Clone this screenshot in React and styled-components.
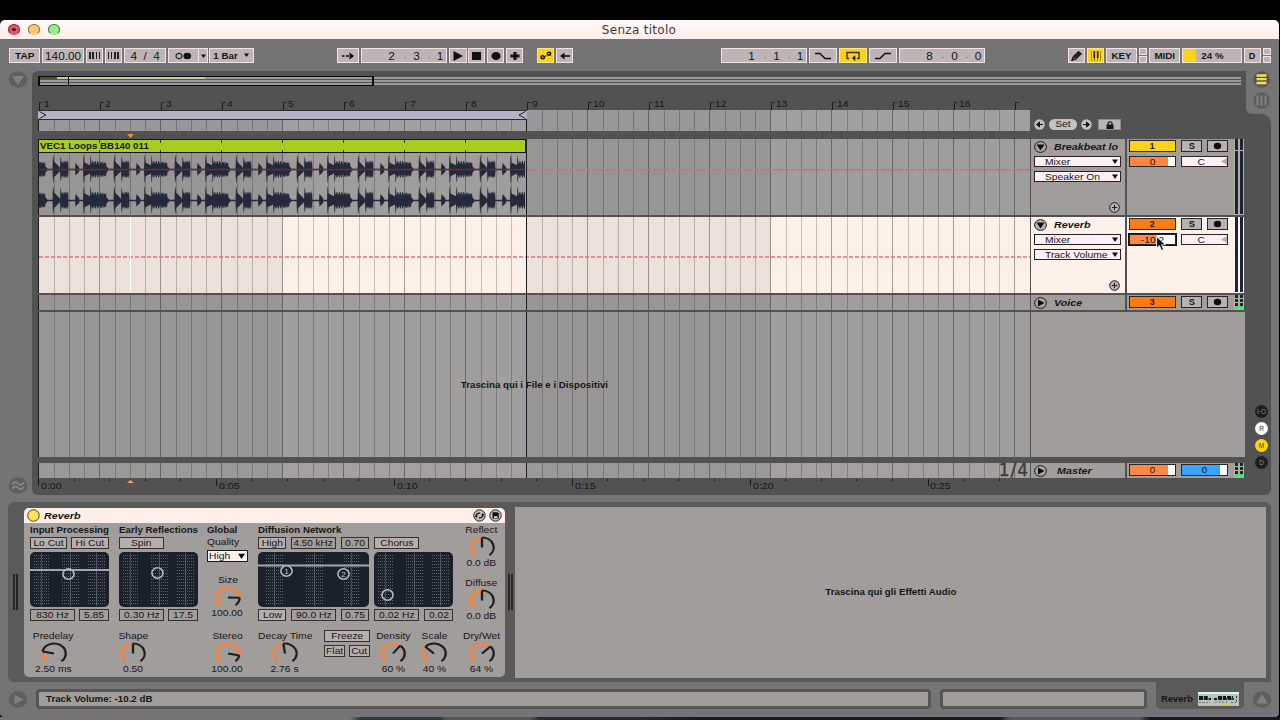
import React from 'react'
import styled, { createGlobalStyle } from 'styled-components'

const colors = {
  chrome: '#747474',
  panel: '#525252',
  detail: '#5a5a5a',
  surface: '#a19d9b',
  control: '#bdb5b5',
  controlEdge: '#efe3e3',
  selected: '#fdf1e9',
  yellow: '#fdd31a',
  orange: '#ff7a0f',
  knob: '#fb8138',
  ink: '#161616',
  screen: '#1b212a',
}

const BAR = 61
const LANES_WIDTH = 992

const GlobalStyle = createGlobalStyle`
  * {
    box-sizing: border-box;
  }
  body {
    margin: 0;
    background: #000;
    overflow: hidden;
    font-family: 'Liberation Sans', Arial, sans-serif;
    font-size: 9.2px;
    line-height: 12px;
    color: ${colors.ink};
  }
  svg {
    display: block;
    flex: none;
  }
`

const defaultStretch = ({ $stretch, $bold, $italic }) => {
  if ($stretch) return $stretch
  if ($italic) return 1.17
  return $bold ? 1.06 : 1.12
}

const Text = styled.span`
  display: inline-block;
  white-space: pre;
  font-size: ${(props) => props.$size ?? 9.2}px;
  font-weight: ${(props) => (props.$bold ? 700 : 400)};
  font-style: ${(props) => (props.$italic ? 'italic' : 'normal')};
  transform: scaleX(${defaultStretch});
  transform-origin: ${(props) => props.$origin ?? 'center'};
`

/* ---------- window ---------- */

const Screen = styled.div`
  width: 1280px;
  height: 720px;
  padding-top: 20px;
  background: #000;
`

const TitleBar = styled.div`
  height: 19px;
  width: 1279px;
  display: flex;
  align-items: center;
  position: relative;
  padding-left: 8px;
  gap: 8px;
  border-radius: 5px 5px 0 0;
  background: linear-gradient(#fffafa, #feedec);
`

const TitleText = styled.div`
  position: absolute;
  top: 1px;
  left: 0;
  right: 1px;
  text-align: center;
  font-family: 'DejaVu Sans', sans-serif;
  font-size: 12px;
  line-height: 19px;
  letter-spacing: 0.3px;
  color: #3c3838;
`

const Light = styled.span`
  width: 12px;
  height: 11px;
  border-radius: 50%;
  border: 1px solid ${(props) => props.$edge};
  border-bottom-color: ${(props) => props.$color};
  background: ${(props) => props.$color};
  display: flex;
  align-items: center;
  justify-content: center;

  &::after {
    content: '';
    width: 4px;
    height: 3px;
    border-radius: 2px;
    background: ${(props) => props.$dot ?? 'transparent'};
  }
`

const Body = styled.div`
  width: 1279px;
  height: 678px;
  background: ${colors.chrome};
  border-radius: 0 0 4px 4px;
`

const Desktop = styled.div`
  height: 3px;
  background: linear-gradient(
    90deg,
    #76766c 0 350px,
    #2c3843 360px 440px,
    #55555a 445px 530px,
    #2b2638 540px 640px,
    #161828 700px 1000px,
    #5b5462 1010px 1140px,
    #14172a 1150px
  );
`

/* ---------- toolbar ---------- */

const Toolbar = styled.div`
  height: 32px;
  padding: 9px 0 0 9px;
  display: flex;
  align-items: flex-start;
`

const ToolButton = styled.div`
  width: ${(props) => props.$w}px;
  height: 15px;
  margin-left: ${(props) => props.$ml ?? 2}px;
  flex: none;
  display: flex;
  align-items: center;
  justify-content: center;
  border: 1px solid ${(props) => (props.$on ? '#ffe98a' : colors.controlEdge)};
  background: ${(props) => (props.$on ? colors.yellow : colors.control)};
`

const Digits = styled(ToolButton)`
  display: grid;
  grid-template-columns: 19px 19px 8px 15px 10px 12px;
  text-align: center;
`

const MapPair = styled.div`
  width: 8px;
  height: 15px;
  margin-left: 2px;
  display: flex;
  flex-direction: column;
  justify-content: space-between;
`

const MapCell = styled.span`
  height: 7px;
  border: 1px solid ${colors.controlEdge};
  background: ${colors.control};
`

const CpuMeter = styled(ToolButton)`
  background: linear-gradient(90deg, ${colors.yellow} 13px, ${colors.control} 13px);
`

const Caret = ({ size = 6 }) => (
  <svg width={size} height={size - 1} viewBox="0 0 6 5">
    <path d="M0 0.5H6L3 5Z" fill="#111" />
  </svg>
)

const Bars = ({ xs }) => (
  <svg width="13" height="7" viewBox="0 0 13 7">
    {xs.map(([x, w]) => (
      <rect key={x} x={x} width={w} height="7" fill="#222" />
    ))}
  </svg>
)

const Position = ({ digits, ml }) => (
  <Digits $w={86} $ml={ml}>
    <span />
    <Text $size={10.5}>{digits[0]}</Text>
    <Text $size={8}>.</Text>
    <Text $size={10.5}>{digits[1]}</Text>
    <Text $size={8}>.</Text>
    <Text $size={10.5}>{digits[2]}</Text>
  </Digits>
)

const ToolbarRow = () => (
  <Toolbar>
    <ToolButton $w={31} $ml={0}>
      <Text $bold $stretch={1.1}>TAP</Text>
    </ToolButton>
    <ToolButton $w={42}>
      <Text $size={10.5} $stretch={1.12}>140.00</Text>
    </ToolButton>
    <ToolButton $w={17}>
      <Bars xs={[[1, 2], [4, 2], [8, 1], [11, 1]]} />
    </ToolButton>
    <ToolButton $w={17}>
      <Bars xs={[[1, 1], [4, 1], [7, 2], [10, 2]]} />
    </ToolButton>
    <ToolButton $w={42}>
      <Text $size={10.5} $stretch={1.12}>{'4  /  4'}</Text>
    </ToolButton>
    <ToolButton $w={31}>
      <svg width="18" height="8" viewBox="0 0 18 8">
        <ellipse cx="4" cy="4" rx="3" ry="2.7" fill="none" stroke="#222" strokeWidth="1.2" />
        <ellipse cx="12.3" cy="4" rx="3.8" ry="3.3" fill="#111" />
      </svg>
    </ToolButton>
    <ToolButton $w={10} $ml={-1}>
      <Caret size={5} />
    </ToolButton>
    <ToolButton $w={45} $ml={1}>
      <Text $bold>1 Bar</Text>
      <svg width="13" height="5" viewBox="0 0 13 5">
        <path d="M8 0.5H13L10.5 4Z" fill="#111" />
      </svg>
    </ToolButton>

    <ToolButton $w={22} $ml={83}>
      <svg width="14" height="8" viewBox="0 0 14 8">
        <path d="M1 4H3.5M5 4H8" stroke="#333" strokeWidth="2" />
        <path d="M8.5 0.3L13 4L8.5 7.7Z" fill="#111" />
      </svg>
    </ToolButton>
    <Position digits={['2', '3', '1']} />
    <ToolButton $w={18}>
      <svg width="10" height="10" viewBox="0 0 10 10">
        <path d="M0.5 0L10 5L0.5 10Z" fill="#111" />
      </svg>
    </ToolButton>
    <ToolButton $w={17} $ml={1}>
      <svg width="9" height="8" viewBox="0 0 9 8">
        <path d="M0 0H9V8H0Z" fill="#111" />
      </svg>
    </ToolButton>
    <ToolButton $w={17}>
      <svg width="10" height="8" viewBox="0 0 10 8">
        <ellipse cx="5" cy="4" rx="4.6" ry="4" fill="#111" />
      </svg>
    </ToolButton>
    <ToolButton $w={17}>
      <svg width="10" height="8" viewBox="0 0 10 8">
        <path d="M5 0V8M0.5 4H9.5" stroke="#111" strokeWidth="3" />
      </svg>
    </ToolButton>
    <ToolButton $w={17} $ml={14} $on>
      <svg width="12" height="9" viewBox="0 0 12 9">
        <ellipse cx="2.7" cy="6.3" rx="1.7" ry="1.5" fill="none" stroke="#111" strokeWidth="1.5" />
        <ellipse cx="9" cy="2.7" rx="1.7" ry="1.5" fill="none" stroke="#111" strokeWidth="1.5" />
        <path d="M5 5H6.5" stroke="#111" strokeWidth="1.2" />
      </svg>
    </ToolButton>
    <ToolButton $w={17}>
      <svg width="10" height="8" viewBox="0 0 10 8">
        <path d="M2 4H10" stroke="#111" strokeWidth="1.6" />
        <path d="M0 4L4.5 0.5V7.5Z" fill="#111" />
      </svg>
    </ToolButton>

    <Position digits={['1', '1', '1']} ml={148} />
    <ToolButton $w={28}>
      <svg width="16" height="8" viewBox="0 0 16 8">
        <path d="M0 1.5H5L10 6.5H16" fill="none" stroke="#111" strokeWidth="1.5" />
      </svg>
    </ToolButton>
    <ToolButton $w={28} $on>
      <svg width="14" height="10" viewBox="0 0 14 10">
        <path d="M3 7.5H1V1.5H13V7.5H11" fill="none" stroke="#3a2d00" strokeWidth="1.3" />
        <path d="M6 7L9.3 4.3V10Z" fill="#111" />
      </svg>
    </ToolButton>
    <ToolButton $w={28}>
      <svg width="16" height="8" viewBox="0 0 16 8">
        <path d="M0 6.5H5L10 1.5H16" fill="none" stroke="#111" strokeWidth="1.5" />
      </svg>
    </ToolButton>
    <Position digits={['8', '0', '0']} />

    <ToolButton $w={17} $ml={83}>
      <svg width="11" height="10" viewBox="0 0 11 10">
        <path d="M1 9.3L2.2 5.8L7.5 0.8L10 2.8L4.8 8Z" fill="#777" stroke="#111" strokeWidth="1.3" />
        <path d="M3.3 6.8L8.3 2.2" stroke="#111" strokeWidth="1.3" />
      </svg>
    </ToolButton>
    <ToolButton $w={17} $on>
      <svg width="10" height="10" viewBox="0 0 10 10">
        <path d="M0.5 0V10M9.5 0V10" stroke="#a88a08" />
        <path d="M3.5 6V10M6.5 6V10" stroke="#8a7008" />
        <path d="M3.3 0V7M6.7 0V7" stroke="#2a2200" strokeWidth="1.7" />
      </svg>
    </ToolButton>
    <ToolButton $w={31}>
      <Text $bold>KEY</Text>
    </ToolButton>
    <MapPair>
      <MapCell />
      <MapCell />
    </MapPair>
    <ToolButton $w={31}>
      <Text $bold>MIDI</Text>
    </ToolButton>
    <CpuMeter $w={60}>
      <Text $bold>24 %</Text>
    </CpuMeter>
    <ToolButton $w={17}>
      <Text $bold $size={8.6}>D</Text>
    </ToolButton>
    <MapPair>
      <MapCell />
      <MapCell />
    </MapPair>
  </Toolbar>
)

/* ---------- arrangement ---------- */

const ArrangeArea = styled.div`
  height: 424px;
  display: flex;
`

const LeftRail = styled.div`
  width: 32px;
  padding: 0 0 1px 3px;
  display: flex;
  flex-direction: column;
  align-items: center;
  justify-content: space-between;
`

const ArrangePanel = styled.div`
  position: relative;
  width: 1239px;
  padding-left: 6px;
  border-radius: 6px;
  background: ${colors.panel};
`

const Notch = styled.div`
  position: absolute;
  top: 0;
  right: 0;
  width: 25px;
  height: 43px;
  display: flex;
  flex-direction: column;
  align-items: center;
  gap: 4px;
  padding-left: 5px;
  background: ${colors.chrome};
  border-bottom-left-radius: 6px;

  &::after {
    content: '';
    position: absolute;
    top: 43px;
    right: 0;
    width: 8px;
    height: 8px;
    background: radial-gradient(circle at 0 100%, transparent 7px, ${colors.chrome} 8px);
  }
`

const Row = styled.div`
  display: flex;
  height: ${(props) => props.$h}px;
  margin-bottom: ${(props) => props.$mb ?? 0}px;
`

const Lane = styled.div`
  position: relative;
  width: ${LANES_WIDTH}px;
  flex: none;
  background: linear-gradient(
    90deg,
    ${(props) => props.$dark} 245px,
    ${(props) => props.$light} 245px 488px,
    ${(props) => props.$dark} 488px 733px,
    ${(props) => props.$light} 733px
  );
`

const LaneSvg = styled.svg`
  position: absolute;
  inset: 0;
`

const Clip = styled.div`
  position: absolute;
  inset: 0 auto 0 0;
  width: 488px;
`

const ClipHeader = styled.div`
  height: 14px;
  border: 1px solid #11150a;
  background: #a8cd20;
  padding-left: 1px;
  position: relative;
`

const BarLabels = styled.div`
  display: flex;
  height: 14px;
  padding-top: 1px;
  color: #161616;
`

const BarLabel = styled.span`
  width: ${BAR}px;
  flex: none;
  position: relative;
  padding-left: 6px;
  line-height: 14px;

  &::before {
    content: '';
    position: absolute;
    left: 1px;
    top: 5px;
    width: 3px;
    height: 9px;
    border-left: 1px solid #1c1c1c;
    border-top: 1px solid #2c2c2c;
  }
`

const LoopBrace = styled.div`
  position: relative;
  width: 489px;
  height: 10px;
  display: flex;
  justify-content: space-between;
  border: 1px solid #2a2a35;
  border-width: 1px 0;
  background: #b4b4c2;
`

const TimeRuler = styled.div`
  position: relative;
  height: 17px;
  display: flex;
`

const TimeLabel = styled.span`
  width: 177.9px;
  flex: none;
  padding: 2px 0 0 3px;
`

const DropHint = styled.div`
  position: absolute;
  inset: 0;
  display: flex;
  align-items: center;
  justify-content: center;
`

const GridSize = styled.span`
  position: absolute;
  right: 1px;
  top: -2px;
  font: 17px/19px 'DejaVu Sans', sans-serif;
  letter-spacing: 1px;
  -webkit-text-stroke: 0.4px #3f3d3c;
  color: #3f3d3c;
`

const Header = styled.div`
  width: 94px;
  margin-left: 1px;
  flex: none;
  position: relative;
  background: ${(props) => (props.$selected ? colors.selected : colors.surface)};
`

const HeaderTitle = styled.div`
  height: 15px;
  display: flex;
  align-items: center;
  gap: 7px;
  padding-left: 3px;
`

const Chooser = styled.div`
  width: 87px;
  height: 11px;
  margin: ${(props) => props.$mt}px 0 0 3px;
  padding: 0 2px 0 10px;
  display: flex;
  align-items: center;
  justify-content: space-between;
  border: 1px solid #2a2024;
  background: #fdeff3;
`

const AddLane = styled.div`
  position: absolute;
  right: 5px;
  bottom: 2px;
`

const Mixer = styled.div`
  width: 107px;
  margin-left: 2px;
  padding: 1px 0 0 2px;
  flex: none;
  display: grid;
  grid-template-columns: 47px 21px 21px;
  grid-template-rows: 12px 11px;
  column-gap: 5px;
  row-gap: 4px;
  background: ${(props) => (props.$selected ? colors.selected : colors.surface)};
`

const MixButton = styled.div`
  display: flex;
  align-items: center;
  justify-content: center;
  border: 1px solid #2b2523;
  background: ${(props) => props.$bg ?? '#b9b1b1'};
`

const NumberButton = styled(MixButton)`
  padding-top: 2px;
`

const MixValue = styled(MixButton)`
  position: relative;
  background: linear-gradient(90deg, ${(props) => props.$bg} ${(props) => props.$fill}px, #fff ${(props) => props.$fill}px);
  outline: ${(props) => (props.$focus ? '1px solid #111' : 'none')};
`

const Pan = styled(MixButton)`
  grid-column: 2 / 4;
  position: relative;
  padding-right: 6px;
  background: #fdeff3;

  svg {
    position: absolute;
    right: 0;
  }
`

const Meters = styled.div`
  width: 10px;
  display: flex;
  gap: 2px;
  padding: 0 0 1px 1px;
  background: ${(props) => (props.$selected ? '#fff6fa' : '#b0acab')};
`

const meterFill = ({ $live, $solid }) => {
  if ($solid) return '#1b2430'
  return $live
    ? 'linear-gradient(transparent 11px, #31f06c 11px), repeating-linear-gradient(#1d2421 0 3px, #a9c4b4 3px 4px)'
    : 'linear-gradient(#1b2430 11px, #b9b9b9 11px 12px, #1b2430 12px)'
}

const Meter = styled.span`
  width: 3px;
  background: ${meterFill};
`

const Locators = styled.div`
  display: flex;
  align-items: center;
  gap: 3px;
  padding: 8px 0 0 4px;
`

const SetPill = styled.span`
  width: 28px;
  height: 11px;
  margin: 0 1px;
  border-radius: 6px;
  background: #c6c0c0;
  text-align: center;
  line-height: 11px;
`

const LockButton = styled.span`
  width: 23px;
  height: 11px;
  margin-left: 3px;
  display: flex;
  align-items: center;
  justify-content: center;
  background: #bab4b4;
  border: 1px solid #918c8c;
`

const ShowButtons = styled.div`
  position: absolute;
  right: 3px;
  top: 334px;
  display: flex;
  flex-direction: column;
  gap: 4px;
`

const ShowButton = styled.span`
  width: 13px;
  height: 13px;
  border-radius: 50%;
  text-align: center;
  font-size: 6.5px;
  line-height: 13px;
  color: ${(props) => props.$fg ?? '#8b8b8b'};
  background: ${(props) => props.$bg ?? '#1e1e1e'};
`

const gridLines = Array.from({ length: 65 }, (_, i) => ({
  x: Math.round(0.4 + (i * BAR) / 4),
  bar: i % 4 === 0,
}))

const Grid = ({ h, children }) => (
  <LaneSvg width={LANES_WIDTH} height={h} viewBox={`0 0 ${LANES_WIDTH} ${h}`}>
    {gridLines.map(({ x, bar }) => (
      <rect key={x} x={x} width="1" height={h} fill="#000" opacity={bar ? 0.34 : 0.21} />
    ))}
    {children}
    <rect x="488" width="1" height={h} fill="#1b1b28" />
    <rect x="0" width="1" height={h} fill="#1b1b1b" />
  </LaneSvg>
)

// hits inside one bar: start, length, peak, level at the end
const hits = [
  [0, 7, 8, 7],
  [7, 2, 3, 1],
  [14.5, 1, 14, 13],
  [15.5, 6, 8, 2],
  [22, 1, 13, 10],
  [23, 7, 8, 9],
  [37, 4, 6.5, 2],
  [45, 1, 14, 13],
  [46, 6, 7, 4],
  [52, 1, 14, 10],
  [53, 8, 8, 8],
]

const peakAt = (x) => {
  const t = x % BAR
  const hit = hits.find(([start, length]) => t >= start && t < start + length)
  if (!hit) return 0.7
  const [start, length, from, to] = hit
  const level = from + ((to - from) * (t - start)) / length
  // sustained hits flicker, short ones just decay
  if (length <= 6) return level
  return level * (0.6 + 0.5 * Math.abs(Math.sin(t * (start > 50 ? 1.3 : 2.7))))
}

const wavePath = (cy) => {
  const top = []
  const bottom = []
  for (let x = 1; x < 487.5; x += 0.5) {
    const peak = peakAt(x - 0.5)
    top.push(`${x} ${(cy - peak).toFixed(1)}`)
    bottom.unshift(`${x} ${(cy + peak * 0.95).toFixed(1)}`)
  }
  return `M${top.join('L')}L${bottom.join('L')}Z`
}

const Fold = ({ open, selected }) => (
  <svg width="13" height="12" viewBox="0 0 13 12">
    <ellipse cx="6.5" cy="6" rx="5.9" ry="5.4" fill={selected ? '#bdb2b2' : '#aaa5a4'} stroke="#1c1c1c" />
    <path d={open ? 'M2.5 3.5H10.5L6.5 9.5Z' : 'M4 2.5L10.5 6L4 9.5Z'} fill="#0d0d0d" />
  </svg>
)

const RecordDot = () => (
  <svg width="9" height="8" viewBox="0 0 9 8">
    <ellipse cx="4.5" cy="4" rx="3.7" ry="3.3" fill="#0d0d0d" />
  </svg>
)

const PanArrow = () => (
  <svg width="6" height="7" viewBox="0 0 6 7">
    <path d="M0 3.5L6 0V7Z" fill="#b9adb0" />
  </svg>
)

const TrackHead = ({ name, number, numberColor, value, fill, params, selected, stretch }) => (
  <>
    <Header $selected={selected}>
      <HeaderTitle>
        <Fold open={!!params} selected={selected} />
        <Text $bold $italic $origin="left" $stretch={stretch}>{name}</Text>
      </HeaderTitle>
      {params && (
        <>
          <Chooser $mt={2}>
            <Text $origin="left">{params[0]}</Text>
            <Caret />
          </Chooser>
          <Chooser $mt={4}>
            <Text $origin="left">{params[1]}</Text>
            <Caret />
          </Chooser>
          <AddLane>
            <svg width="11" height="11" viewBox="0 0 11 11">
              <circle cx="5.5" cy="5.5" r="4.8" fill="#bcb2b2" stroke="#1c1c1c" />
              <path d="M5.5 2.8V8.2M2.8 5.5H8.2" stroke="#1c1c1c" />
            </svg>
          </AddLane>
        </>
      )}
    </Header>
    <Mixer $selected={selected}>
      <NumberButton $bg={numberColor}>
        <Text $size={8.2} $bold>{number}</Text>
      </NumberButton>
      <MixButton>
        <Text $size={8.8} $bold>S</Text>
      </MixButton>
      <MixButton>
        <RecordDot />
      </MixButton>
      {params && (
        <>
          <MixValue $bg="#fd8843" $fill={fill} $focus={selected}>
            <Text>{value}</Text>
            {selected && <Cursor />}
          </MixValue>
          <Pan>
            <Text>C</Text>
            <PanArrow />
          </Pan>
        </>
      )}
    </Mixer>
    <Meters $selected={selected}>
      <Meter $live={!params} $solid={selected} />
      <Meter $live={!params} $solid={selected} />
    </Meters>
  </>
)

const CursorSvg = styled.svg`
  position: absolute;
  left: 26px;
  top: 1px;
  z-index: 2;
`

const Cursor = () => (
  <CursorSvg width="12" height="16" viewBox="0 0 12 16">
    <path d="M0.6 0.5V12L3.4 9.6L5.4 14.4L7.6 13.5L5.6 8.8H9.4Z" fill="#111" stroke="#fff" strokeWidth="0.9" />
  </CursorSvg>
)

const Overview = () => (
  <svg width="1205" height="25" viewBox="0 0 1205 25">
    {[6, 9, 12].map((y) => (
      <rect key={y} x="0" y={y} width="1203" height="2" fill="#9c9998" />
    ))}
    <rect x="2" y="6" width="17" height="2" fill="#4b5220" />
    <rect x="19" y="6" width="148" height="2" fill="#c3cf96" />
    <rect x="0.5" y="5.5" width="335" height="9" fill="none" stroke="#0b0b0b" />
    <path d="M1 5V15M335 5V15" stroke="#0b0b0b" strokeWidth="2" />
    <rect x="30" y="6" width="1" height="9" fill="#0b0b0b" />
  </svg>
)

const RailIcon = ({ d, stroked }) => (
  <svg width="20" height="17" viewBox="0 0 20 17">
    <ellipse cx="10" cy="8.5" rx="9.3" ry="8.3" fill="#5f5f5f" />
    <path
      d={d}
      fill={stroked ? 'none' : '#808080'}
      stroke={stroked ? '#8a8a8a' : 'none'}
      strokeWidth="1.6"
    />
  </svg>
)

const Arrangement = () => (
  <ArrangeArea>
    <LeftRail>
      <RailIcon d="M4 5H16L10 14Z" />
      <RailIcon stroked d="M4 7.5C6 4.5 8 4.5 10 6.5S14 8.5 16 5.5M4 11.8C6 8.8 8 8.8 10 10.8S14 12.8 16 9.8" />
    </LeftRail>
    <ArrangePanel>
      <Overview />
      <BarLabels>
        {Array.from({ length: 17 }, (_, i) => (
          <BarLabel key={i}>
            <Text $origin="left">{i < 16 ? i + 1 : ''}</Text>
          </BarLabel>
        ))}
      </BarLabels>
      <Row $h={21}>
        <Lane $dark="#999799" $light="#a2a09f">
          <Grid h={21} />
          <LoopBrace>
            <svg width="9" height="8" viewBox="0 0 9 8">
              <path d="M1.5 0.5L8 4L1.5 7.5" fill="none" stroke="#222" />
            </svg>
            <svg width="9" height="8" viewBox="0 0 9 8">
              <path d="M7.5 0.5L1 4L7.5 7.5" fill="none" stroke="#222" />
            </svg>
          </LoopBrace>
        </Lane>
        <Locators>
          <svg width="11" height="11" viewBox="0 0 11 11">
            <circle cx="5.5" cy="5.5" r="5.2" fill="#c6c0c0" />
            <path d="M4 5.5H9M5.5 3L2.5 5.5L5.5 8Z" fill="#111" stroke="#111" />
          </svg>
          <SetPill>
            <Text>Set</Text>
          </SetPill>
          <svg width="11" height="11" viewBox="0 0 11 11">
            <circle cx="5.5" cy="5.5" r="5.2" fill="#c6c0c0" />
            <path d="M7 5.5H2M5.5 3L8.5 5.5L5.5 8Z" fill="#111" stroke="#111" />
          </svg>
          <LockButton>
            <svg width="8" height="8" viewBox="0 0 8 8">
              <path d="M0.5 3.5H7.5V8H0.5Z" fill="#151515" />
              <path d="M2 4V2.2C2 0.4 6 0.4 6 2.2V4" fill="none" stroke="#151515" strokeWidth="1.2" />
            </svg>
          </LockButton>
        </Locators>
      </Row>
      <svg width="992" height="8" viewBox="0 0 992 8">
        <path d="M89 3H96L92.5 7Z" fill="#f98b3a" />
      </svg>

      <Row $h={76} $mb={2}>
        <Lane $dark="#989695" $light="#a09e9c">
          <Grid h={76}>
            <rect x="489" y="30" width="503" height="1" fill="#d07c80" />
            <path d="M489 30.7H992" stroke="#ea5f69" strokeWidth="1.6" strokeDasharray="4 2" />
          </Grid>
          <Clip>
            <ClipHeader>
              <Text $bold $origin="left">VEC1 Loops BB140 011</Text>
              <LaneSvg width="486" height="12" viewBox="0 0 486 12">
                {[1, 2, 3, 4, 5, 6, 7].map((i) => (
                  <path key={i} d={`M${i * BAR - 0.5} 0V3M${i * BAR - 0.5} 10V12`} stroke="#2d3808" />
                ))}
              </LaneSvg>
            </ClipHeader>
            <svg width="488" height="62" viewBox="0 14 488 62">
              <path d={wavePath(30.5)} fill="#252a3a" />
              <rect x="1" y="29.8" width="487" height="1.5" fill="#a8283a" opacity="0.6" />
              <path d={wavePath(61.5)} fill="#252a3a" />
            </svg>
          </Clip>
        </Lane>
        <TrackHead
          name="Breakbeat lo"
          number="1"
          numberColor={colors.yellow}
          value="0"
          fill={38}
          params={['Mixer', 'Speaker On']}
          stretch={1.16}
        />
      </Row>

      <Row $h={76} $mb={2}>
        <Lane $dark="#ebe0da" $light="#fdf1e7">
          <Grid h={76}>
            <path d="M1 40H992" stroke="#ea7079" strokeWidth="1.6" strokeDasharray="4 2" />
            <rect x="92" width="1" height="76" fill="#fffaf4" />
          </Grid>
        </Lane>
        <TrackHead
          selected
          name="Reverb"
          number="2"
          numberColor={colors.orange}
          value="-10.2"
          fill={27}
          params={['Mixer', 'Track Volume']}
        />
      </Row>

      <Row $h={15} $mb={2}>
        <Lane $dark="#989695" $light="#a09e9c">
          <Grid h={15} />
        </Lane>
        <TrackHead name="Voice" number="3" numberColor={colors.orange} />
      </Row>

      <Row $h={145} $mb={6}>
        <Lane $dark="#989695" $light="#a09e9c">
          <Grid h={145} />
          <DropHint>
            <Text $bold>Trascina qui i File e i Dispositivi</Text>
          </DropHint>
        </Lane>
        <EmptyHead />
      </Row>

      <Row $h={15}>
        <Lane $dark="#9b9998" $light="#a3a09f">
          <Grid h={15} />
          <GridSize>1/4</GridSize>
        </Lane>
        <Header>
          <HeaderTitle>
            <Fold />
            <MasterName>
              <Text $bold $italic $origin="left">Master</Text>
            </MasterName>
          </HeaderTitle>
        </Header>
        <MasterMixer>
          <MixValue $bg="#fd8843" $fill={38}>
            <Text $size={8.6}>0</Text>
          </MixValue>
          <MixValue $bg="#38a4fb" $fill={38}>
            <Text $size={8.6}>0</Text>
          </MixValue>
        </MasterMixer>
        <Meters>
          <Meter $live />
          <Meter $live />
        </Meters>
      </Row>

      <TimeRuler>
        <LaneSvg width={LANES_WIDTH} height="17" viewBox={`0 0 ${LANES_WIDTH} 17`}>
          {Array.from({ length: 28 }, (_, i) => (
            <rect
              key={i}
              x={Math.round(i * 35.58)}
              y="1"
              width="1"
              height={i % 5 ? 2 : 7}
              fill="#1a1a1a"
            />
          ))}
          <path d="M89 5L92.5 2L96 5Z" fill="#f0a068" />
        </LaneSvg>
        {['0:00', '0:05', '0:10', '0:15', '0:20', '0:25'].map((label) => (
          <TimeLabel key={label}>
            <Text $origin="left" $size={9.5}>{label}</Text>
          </TimeLabel>
        ))}
      </TimeRuler>

      <Notch>
        <svg width="17" height="17" viewBox="0 0 17 17">
          <circle cx="8.5" cy="8.5" r="8.2" fill="#575757" />
          <path d="M3.5 4.5H13.5M3.5 8.2H13.5M3.5 12H13.5" stroke="#f5e04b" strokeWidth="2.3" />
        </svg>
        <svg width="17" height="17" viewBox="0 0 17 17">
          <circle cx="8.5" cy="8.5" r="8.2" fill="#5c5c5c" />
          <path d="M4.5 3.5V13.5M8.5 3.5V13.5M12.5 3.5V13.5" stroke="#848484" strokeWidth="2" />
        </svg>
      </Notch>
      <ShowButtons>
        <ShowButton>I·O</ShowButton>
        <ShowButton $bg="#fffafa" $fg="#333">R</ShowButton>
        <ShowButton $bg={colors.yellow} $fg="#4a3c00">M</ShowButton>
        <ShowButton>D</ShowButton>
      </ShowButtons>
    </ArrangePanel>
  </ArrangeArea>
)

const EmptyHead = styled.div`
  width: 214px;
  margin-left: 1px;
  background: ${colors.surface};
`

const MasterName = styled.span`
  padding-left: 3px;
`

const MasterMixer = styled(Mixer)`
  grid-template-columns: 47px 47px;
`

/* ---------- device view ---------- */

const Detail = styled.div`
  height: 180px;
  margin: 7px 0 0 8px;
  width: 1263px;
  padding: 5px 0 0 5px;
  display: flex;
  border-radius: 6px 6px 0 6px;
  background: ${colors.detail};
`

const Grip = styled.div`
  width: 5px;
  height: 36px;
  margin: 67px ${(props) => props.$mr}px 0 0;
  border: solid #262626;
  border-width: 0 2px;
  background: #5c5c5c;
`

const Device = styled.div`
  width: 481px;
  height: 169px;
  margin: 1px 3px 0 0;
  border-radius: 5px;
  overflow: hidden;
  background: ${colors.surface};
`

const DeviceTitle = styled.div`
  height: 15px;
  display: flex;
  align-items: center;
  gap: 4px;
  padding: 0 3px;
  background: #feefe8;
`

const DeviceActions = styled.div`
  margin-left: auto;
  display: flex;
  gap: 3px;
`

const DeviceBody = styled.div`
  display: flex;
  padding-left: 6px;
`

const Section = styled.div`
  width: ${(props) => props.$w}px;
  margin-right: ${(props) => props.$mr ?? 0}px;
  flex: none;
  display: flex;
  flex-direction: column;
`

const SectionTitle = styled.div`
  height: 14px;
  line-height: 14px;
`

const Cells = styled.div`
  display: flex;
  height: 12px;
  gap: ${(props) => props.$gap ?? 4}px;
  margin-bottom: ${(props) => props.$mb ?? 0}px;
`

const Cell = styled.div`
  width: ${(props) => props.$w}px;
  flex: none;
  display: flex;
  align-items: center;
  justify-content: center;
  border: 1px solid #33302f;
  background: ${(props) => (props.$button ? '#b5afae' : 'transparent')};
`

const Displays = styled.div`
  display: flex;
  gap: 5px;
  margin-bottom: 2px;
`

const KnobRow = styled.div`
  display: flex;
  position: relative;
  margin-top: 9px;
`

const KnobBox = styled.div`
  width: ${(props) => props.$w}px;
  height: 45px;
  margin-left: ${(props) => props.$ml ?? 0}px;
  flex: none;
  display: flex;
  flex-direction: column;
  align-items: center;

  svg {
    margin-bottom: -2px;
  }
`

const Quality = styled.div`
  height: 12px;
  margin: -1px 0 2px;
`

const QualityChooser = styled.div`
  width: 41px;
  height: 12px;
  margin-bottom: 17px;
  padding: 0 2px 0 1px;
  display: flex;
  align-items: center;
  justify-content: space-between;
  border: 1px solid #1c1c1c;
  background: #fdeff0;
`

const FreezeBox = styled.div`
  width: 46px;
  margin-left: 12px;
  display: flex;
  flex-wrap: wrap;
  gap: 3px 4px;
  align-content: flex-start;
`

const SmallCell = styled(Cell)`
  height: 12px;
`

const polar = (deg, r) => {
  const a = (deg * Math.PI) / 180
  return `${(Math.sin(a) * r).toFixed(2)} ${(-Math.cos(a) * r).toFixed(2)}`
}

const arc = (from, to, r) =>
  `M${polar(from, r)}A${r} ${r} 0 ${to - from > 180 ? 1 : 0} 1 ${polar(to, r)}`

const Knob = ({ label, value, angle, w = 40, ml }) => (
  <KnobBox $w={w} $ml={ml}>
    <Text>{label}</Text>
    <svg width="28" height="23" viewBox="-14 -11.5 28 23">
      <g transform="scale(1.17 1)" fill="none">
        <path d={arc(-140, angle, 9.6)} stroke={colors.knob} strokeWidth="3" strokeDasharray="3.2 0.7" />
        <path d={arc(angle, 140, 10)} stroke="#1f1f1f" strokeWidth="2" />
        <path d={`M0 0L${polar(angle, 10)}`} stroke="#1f1f1f" strokeWidth="2" />
      </g>
    </svg>
    <Text>{value}</Text>
  </KnobBox>
)

const XYDisplay = ({ w, id, line, points }) => (
  <svg width={w} height="55" viewBox={`0 0 ${w} 55`}>
    <defs>
      <pattern id={id} width="2" height="3" patternUnits="userSpaceOnUse">
        <rect width="1" height="1" fill="#5b626b" />
      </pattern>
    </defs>
    <rect width={w} height="55" rx="5" fill={colors.screen} />
    {[0.14, 0.5, 0.84].map((t) => (
      <rect key={t} x={Math.round(w * t) - 8} y="1" width="17" height="53" fill={`url(#${id})`} />
    ))}
    <path d={`M${Math.round(w * 0.14) + 0.5} 1V54M${Math.round(w * 0.5) + 0.5} 1V54M${Math.round(w * 0.84) + 0.5} 1V54`} stroke="#535a63" strokeDasharray="2 1" />
    {line && <path d={`M0 ${line}H${w}`} stroke="#9fa7b2" strokeWidth="2" />}
    {points.map(({ x, y, n }) => (
      <g key={x}>
        <ellipse cx={x} cy={y} rx="5.6" ry="5.2" fill={n ? colors.screen : 'none'} stroke="#b3bac4" strokeWidth="1.6" />
        {n && (
          <text x={x} y={y + 3} fill="#c3c9d2" fontSize="8" textAnchor="middle">
            {n}
          </text>
        )}
      </g>
    ))}
  </svg>
)

const DropArea = styled.div`
  width: 751px;
  height: 171px;
  padding-bottom: 2px;
  display: flex;
  align-items: center;
  justify-content: center;
  background: ${colors.surface};
`

const ReverbDevice = () => (
  <Device>
    <DeviceTitle>
      <svg width="13" height="13" viewBox="0 0 13 13">
        <circle cx="6.5" cy="6.5" r="5.8" fill="#fbdb4e" stroke="#5b4a18" />
        <path d="M6.5 2.5V10.5M4 4V9M9 4V9" stroke="#ffef9a" />
      </svg>
      <Text $bold $italic $origin="left">Reverb</Text>
      <DeviceActions>
        <svg width="13" height="13" viewBox="0 0 13 13">
          <circle cx="6.5" cy="6.5" r="5.7" fill="#c7bcbc" stroke="#222" />
          <path d="M3 7.5C3 5 5 3.8 7.2 4.2M10 5.5C10 8 8 9.2 5.8 8.8" fill="none" stroke="#111" strokeWidth="1.3" />
          <path d="M1.8 6.8H5L3.2 9ZM11.2 6.2H8L9.8 4Z" fill="#111" />
        </svg>
        <svg width="13" height="13" viewBox="0 0 13 13">
          <circle cx="6.5" cy="6.5" r="5.7" fill="#c7bcbc" stroke="#222" />
          <path d="M3.5 3.2H8.5L9.8 4.5V9.5H3.5Z" fill="#111" />
          <path d="M5 7.2H8.5V9H5Z" fill="#ddd" />
        </svg>
      </DeviceActions>
    </DeviceTitle>
    <DeviceBody>
      <Section $w={79} $mr={10}>
        <SectionTitle>
          <Text $bold $origin="left">Input Processing</Text>
        </SectionTitle>
        <Cells $mb={3}>
          <Cell $w={37} $button><Text>Lo Cut</Text></Cell>
          <Cell $w={38} $button><Text>Hi Cut</Text></Cell>
        </Cells>
        <Displays>
          <XYDisplay id="dots-in" w={79} line={18} points={[{ x: 38.5, y: 22 }]} />
        </Displays>
        <Cells>
          <Cell $w={45}><Text>830 Hz</Text></Cell>
          <Cell $w={30}><Text>5.85</Text></Cell>
        </Cells>
        <KnobRow>
          <Knob label="Predelay" value="2.50 ms" angle={-78} w={47} />
        </KnobRow>
      </Section>

      <Section $w={79} $mr={9}>
        <SectionTitle>
          <Text $bold $origin="left">Early Reflections</Text>
        </SectionTitle>
        <Cells $mb={3}>
          <Cell $w={45} $button><Text>Spin</Text></Cell>
        </Cells>
        <Displays>
          <XYDisplay id="dots-er" w={79} points={[{ x: 38.5, y: 21 }]} />
        </Displays>
        <Cells>
          <Cell $w={45}><Text>0.30 Hz</Text></Cell>
          <Cell $w={30}><Text>17.5</Text></Cell>
        </Cells>
        <KnobRow>
          <Knob label="Shape" value="0.50" angle={0} w={28} />
        </KnobRow>
      </Section>

      <Section $w={41} $mr={10}>
        <SectionTitle>
          <Text $bold $origin="left">Global</Text>
        </SectionTitle>
        <Quality>
          <Text $origin="left">Quality</Text>
        </Quality>
        <QualityChooser>
          <Text $origin="left">High</Text>
          <Caret size={7} />
        </QualityChooser>
        <SizeKnob>
          <Knob label="Size" value="100.00" angle={92} w={41} />
        </SizeKnob>
        <Knob label="Stereo" value="100.00" angle={102} w={41} />
      </Section>

      <Section $w={195} $mr={13}>
        <SectionTitle>
          <Text $bold $origin="left">Diffusion Network</Text>
        </SectionTitle>
        <Cells $mb={3} $gap={5}>
          <Cell $w={28} $button><Text>High</Text></Cell>
          <Cell $w={45}><Text $stretch={1.08}>4.50 kHz</Text></Cell>
          <Cell $w={28}><Text>0.70</Text></Cell>
          <Cell $w={45} $button><Text>Chorus</Text></Cell>
        </Cells>
        <Displays>
          <XYDisplay id="dots-dn" w={111} line={13.5} points={[{ x: 28.5, y: 19, n: 1 }, { x: 85.5, y: 22, n: 2 }]} />
          <XYDisplay id="dots-ch" w={79} points={[{ x: 13.5, y: 43 }]} />
        </Displays>
        <Cells $gap={5}>
          <Cell $w={28} $button><Text>Low</Text></Cell>
          <Cell $w={45}><Text>90.0 Hz</Text></Cell>
          <Cell $w={28}><Text>0.75</Text></Cell>
          <Cell $w={45}><Text>0.02 Hz</Text></Cell>
          <Cell $w={29}><Text>0.02</Text></Cell>
        </Cells>
        <KnobRow>
          <Knob label="Decay Time" value="2.76 s" angle={-8} w={54} />
          <FreezeBox>
            <SmallCell $w={46} $button><Text>Freeze</Text></SmallCell>
            <SmallCell $w={21} $button><Text>Flat</Text></SmallCell>
            <SmallCell $w={21} $button><Text>Cut</Text></SmallCell>
          </FreezeBox>
          <Knob label="Density" value="60 %" angle={38} w={36} ml={5} />
          <Knob label="Scale" value="40 %" angle={-48} w={36} ml={5} />
        </KnobRow>
      </Section>

      <Section $w={34}>
        <TopKnob>
          <Knob label="Reflect" value="0.0 dB" angle={0} w={31} />
        </TopKnob>
        <LowerKnob $mt={8}>
          <Knob label="Diffuse" value="0.0 dB" angle={0} w={31} />
        </LowerKnob>
        <LowerKnob $mt={8}>
          <Knob label="Dry/Wet" value="64 %" angle={46} w={31} />
        </LowerKnob>
      </Section>
    </DeviceBody>
  </Device>
)

const SizeKnob = styled.div`
  height: 56px;
  margin-top: -5px;
`

const TopKnob = styled.div`
  padding-top: 1px;
`

const LowerKnob = styled.div`
  margin-top: ${(props) => props.$mt}px;
`

/* ---------- status bar ---------- */

const StatusBar = styled.div`
  height: 35px;
  display: flex;
  align-items: flex-start;
  padding-left: 8px;
`

const StatusIcon = styled.div`
  padding-top: 9px;
  margin-right: ${(props) => props.$mr ?? 0}px;
`

const StatusField = styled.div`
  width: ${(props) => props.$w}px;
  height: 20px;
  margin: 7px 9px 0 0;
  padding-left: 7px;
  border: 3px solid #565656;
  border-radius: 4px;
  background: ${colors.surface};
  line-height: 14px;
`

const DeviceTab = styled.div`
  width: 88px;
  height: 27px;
  margin-right: 8px;
  display: flex;
  align-items: center;
  justify-content: space-between;
  padding: 7px 5px 0 5px;
  border-radius: 0 0 5px 5px;
  background: ${colors.detail};
`

const Thumbnail = () => (
  <svg width="41" height="14" viewBox="0 0 41 14">
    <rect width="41" height="14" fill="#b9c4bd" />
    <rect width="41" height="2" fill="#d7fbe9" />
    <path d="M1 5H10M1 7H13M16 7H19M20 5H28M20 7H36M29 5H35" stroke="#14191c" strokeWidth="2.2" strokeDasharray="4 0.8" />
    <path d="M1 10.5H12M17 10H30M33 10.5H38" stroke="#66706a" strokeDasharray="2 1.5" />
    <path d="M24 12.5H31" stroke="#d9cb52" />
    <path d="M38.5 4V10" stroke="#3b4541" strokeDasharray="2 1.5" />
  </svg>
)

const Status = () => (
  <StatusBar>
    <StatusIcon $mr={8}>
      <RailIcon d="M6.5 3.5L15.5 8.5L6.5 13.5Z" />
    </StatusIcon>
    <StatusField $w={895}>
      <Text $bold $origin="left">Track Volume: -10.2 dB</Text>
    </StatusField>
    <StatusField $w={207} />
    <DeviceTab>
      <Text $bold $origin="left" $stretch={1.03}>Reverb</Text>
      <Thumbnail />
    </DeviceTab>
    <StatusIcon>
      <RailIcon d="M10 3L15.5 12.5H4.5Z" />
    </StatusIcon>
  </StatusBar>
)

const App = () => (
  <Screen>
    <GlobalStyle />
    <TitleBar>
      <Light $color="#e8556a" $edge="#8d1f30" $dot="#5a0714" />
      <Light $color="#ffc977" $edge="#9c6326" />
      <Light $color="#97ee8b" $edge="#3c7a38" />
      <TitleText>Senza titolo</TitleText>
    </TitleBar>
    <Body>
      <ToolbarRow />
      <Arrangement />
      <Detail>
        <Grip $mr={6} />
        <ReverbDevice />
        <Grip $mr={2} />
        <DropArea>
          <Text $bold>Trascina qui gli Effetti Audio</Text>
        </DropArea>
      </Detail>
      <Status />
    </Body>
    <Desktop />
  </Screen>
)

export default App
